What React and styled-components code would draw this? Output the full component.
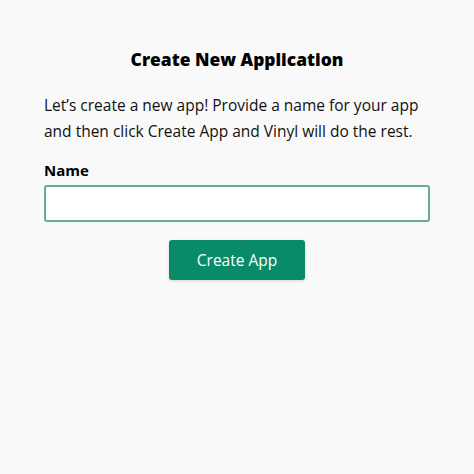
import React from 'react';
import styled, { createGlobalStyle } from 'styled-components';

const GlobalStyle = createGlobalStyle`
  html, body {
    margin: 0;
    padding: 0;
    background: #f9f9f9;
  }
  body {
    font-family: "Open Sans", "Noto Sans", sans-serif;
    color: #111;
  }
`;

const Page = styled.div`
  width: 474px;
  height: 474px;
  box-sizing: border-box;
  padding: 46px 44px 0;
  display: flex;
  flex-direction: column;
`;

const Title = styled.h1`
  margin: 0;
  font-size: 17.4px;
  font-weight: 800;
  line-height: 26px;
  text-align: center;
  color: #000;
`;

const Intro = styled.p`
  margin: 20px 0 0;
  font-size: 15.5px;
  line-height: 26px;
  color: #111;
`;

const Label = styled.label`
  display: block;
  margin-top: 16px;
  font-size: 15px;
  font-weight: 700;
  line-height: 20px;
  color: #000;
`;

const Input = styled.input`
  display: block;
  box-sizing: border-box;
  width: 100%;
  height: 37px;
  margin-top: 5px;
  border: 2px solid #6aa999;
  border-radius: 3px;
  background: #fff;
  font: inherit;
  outline: none;
`;

const Actions = styled.div`
  display: flex;
  justify-content: center;
  margin-top: 18px;
`;

const Button = styled.button`
  width: 136px;
  height: 40px;
  border: none;
  border-radius: 3px;
  background: #098a69;
  color: #fff;
  font-family: "Open Sans", sans-serif;
  font-size: 15.5px;
  font-weight: 500;
  box-shadow: 0 1px 3px rgba(0, 0, 0, 0.15);
  cursor: pointer;
`;

export default function App() {
  return (
    <>
      <GlobalStyle />
      <Page>
        <Title>Create New Application</Title>
        <Intro>
          Let’s create a new app! Provide a name for your app and then click
          Create App and Vinyl will do the rest.
        </Intro>
        <Label htmlFor="app-name">Name</Label>
        <Input id="app-name" type="text" />
        <Actions>
          <Button>Create App</Button>
        </Actions>
      </Page>
    </>
  );
}
